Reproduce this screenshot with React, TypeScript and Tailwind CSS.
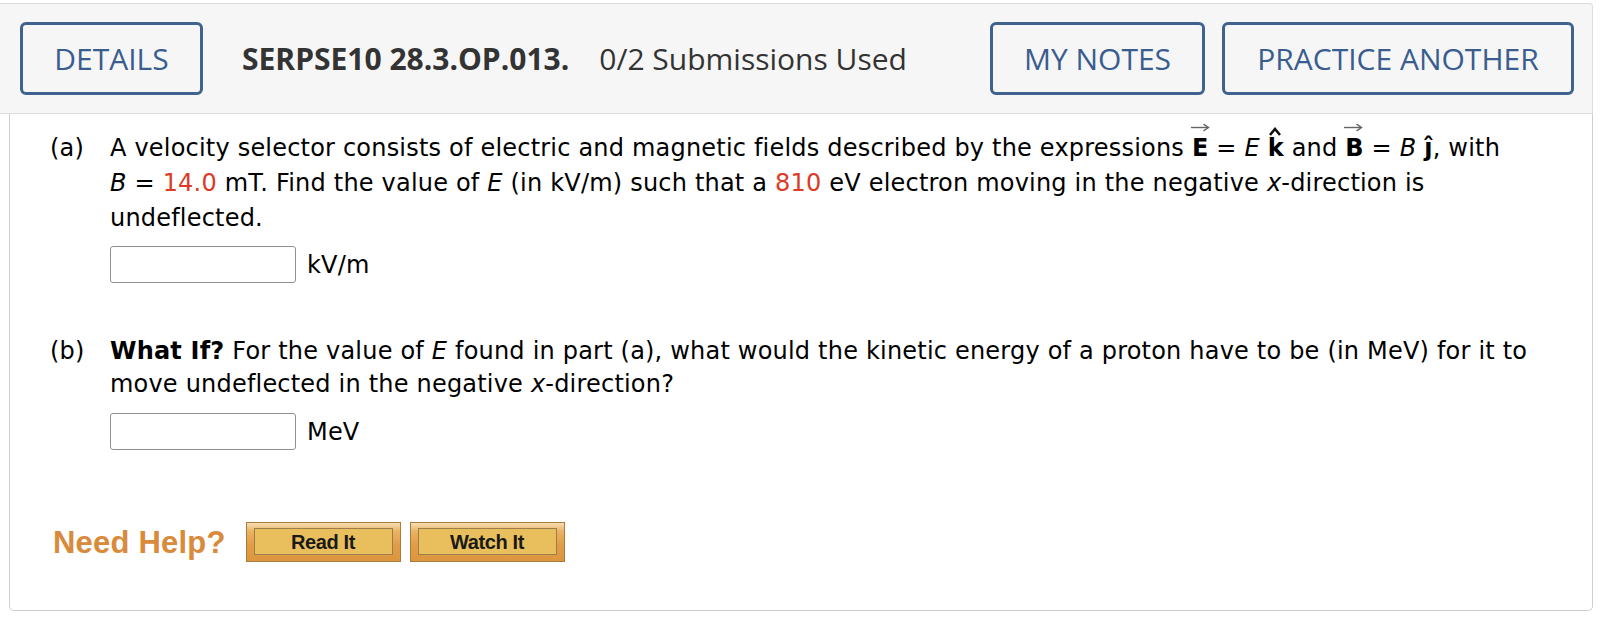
import React from "react";

function Arrow() {
  return (
    <svg
      className="absolute left-[-2px] top-[-13px]"
      width="20"
      height="9"
      viewBox="0 0 20 9"
      fill="none"
    >
      <path d="M1 4.5 H18" stroke="#666" strokeWidth="1.4" />
      <path d="M13.5 1.2 L18.5 4.5 L13.5 7.8" stroke="#666" strokeWidth="1.4" fill="none" />
    </svg>
  );
}

function Vec({ ch }: { ch: string }) {
  return (
    <span className="relative inline-block font-bold leading-none">
      {ch}
      <Arrow />
    </span>
  );
}

function HatK() {
  return (
    <span className="relative inline-block font-bold leading-none">
      k
      <svg
        className="absolute left-[0px] top-[-9px]"
        width="14"
        height="9"
        viewBox="0 0 14 9"
        fill="none"
      >
        <path d="M2 8 L7 2 L12 8" stroke="#111" strokeWidth="2.6" fill="none" />
      </svg>
    </span>
  );
}

function HelpButton({ label }: { label: string }) {
  return (
    <div className="w-[155px] h-[40px] border border-[#a97b3c] bg-[linear-gradient(to_bottom,#f7dfb4_0%,#eab262_22%,#e09c45_60%,#dd9640_100%)] px-[7px] pt-[5px] pb-[6px]">
      <div className="w-full h-full border border-[#9c7d4c] bg-[#e9bf5d] flex items-center justify-center text-[20px] font-bold text-[#1a1a1a] [font-family:'Liberation_Sans',Arial,sans-serif] tracking-[-0.4px]">
        {label}
      </div>
    </div>
  );
}

export default function App() {
  const red = "text-[#dc3b26]";
  return (
    <div className="w-[1609px] h-[644px] bg-white overflow-hidden pt-[3px]">
      <div className="w-[1593px] h-[111px] bg-[#f6f6f6] border-t border-r border-b border-[#dcdcdc] rounded-tr-[4px] flex items-center pl-[20px] pr-[18px] [font-family:'Open_Sans',sans-serif] text-[30px]">
        <div className="w-[183px] h-[73px] border-[3px] border-[#40628f] rounded-[6px] flex items-center justify-center text-[#3a5d8f] font-medium bg-[#f6f6f6]">
          DETAILS
        </div>
        <span className="ml-[39px] font-bold text-[#333]">SERPSE10 28.3.OP.013.</span>
        <span className="ml-[30px] text-[#333]">0/2 Submissions Used</span>
        <div className="flex-1" />
        <div className="w-[215px] h-[73px] border-[3px] border-[#40628f] rounded-[6px] flex items-center justify-center text-[#3a5d8f] font-medium">
          MY NOTES
        </div>
        <div className="ml-[17px] w-[352px] h-[73px] border-[3px] border-[#40628f] rounded-[6px] flex items-center justify-center text-[#3a5d8f] font-medium">
          PRACTICE ANOTHER
        </div>
      </div>

      <div className="ml-[9px] w-[1584px] h-[497px] border-l border-r border-b border-[#cfcfcf] rounded-b-[5px] pt-[16px] pl-[40px] [font-family:'DejaVu_Sans',Verdana,sans-serif] text-[24px] tracking-[0.2px] [font-variant-ligatures:none] text-black">
        {/* part a */}
        <div className="flex">
          <div className="w-[60px] shrink-0 leading-[36px]">(a)</div>
          <div>
            <div className="leading-[36px] whitespace-nowrap">
              A velocity selector consists of electric and magnetic fields described by the expressions{" "}
              <Vec ch="E" /> = <i>E</i> <HatK /> and <Vec ch="B" /> = <i>B</i> <b>ĵ</b>, with
            </div>
            <div className="leading-[35px] whitespace-nowrap">
              <i>B</i> = <span className={red}>14.0</span> mT. Find the value of <i>E</i> (in kV/m) such that a{" "}
              <span className={red}>810</span> eV electron moving in the negative <i>x</i>-direction is
            </div>
            <div className="leading-[35px] whitespace-nowrap">undeflected.</div>
            <div className="mt-[10px] flex items-center">
              <div className="w-[186px] h-[37px] border border-[#8f8f8f] rounded-[3px] bg-white" />
              <span className="ml-[11px]">kV/m</span>
            </div>
          </div>
        </div>

        {/* part b */}
        <div className="flex mt-[52px]">
          <div className="w-[60px] shrink-0 leading-[33px]">(b)</div>
          <div>
            <div className="leading-[33px] whitespace-nowrap">
              <b>What If?</b> For the value of <i>E</i> found in part (a), what would the kinetic energy of a proton have to be (in MeV) for it to
            </div>
            <div className="leading-[33px] whitespace-nowrap">
              move undeflected in the negative <i>x</i>-direction?
            </div>
            <div className="mt-[12px] flex items-center">
              <div className="w-[186px] h-[37px] border border-[#8f8f8f] rounded-[3px] bg-white" />
              <span className="ml-[11px]">MeV</span>
            </div>
          </div>
        </div>

        {/* need help */}
        <div className="mt-[72px] ml-[3px] flex items-center">
          <span className="[font-family:'Liberation_Sans',Arial,sans-serif] font-bold text-[31px] text-[#d98a3a] leading-none">
            Need Help?
          </span>
          <div className="ml-[20px]">
            <HelpButton label="Read It" />
          </div>
          <div className="ml-[9px]">
            <HelpButton label="Watch It" />
          </div>
        </div>
      </div>
    </div>
  );
}
